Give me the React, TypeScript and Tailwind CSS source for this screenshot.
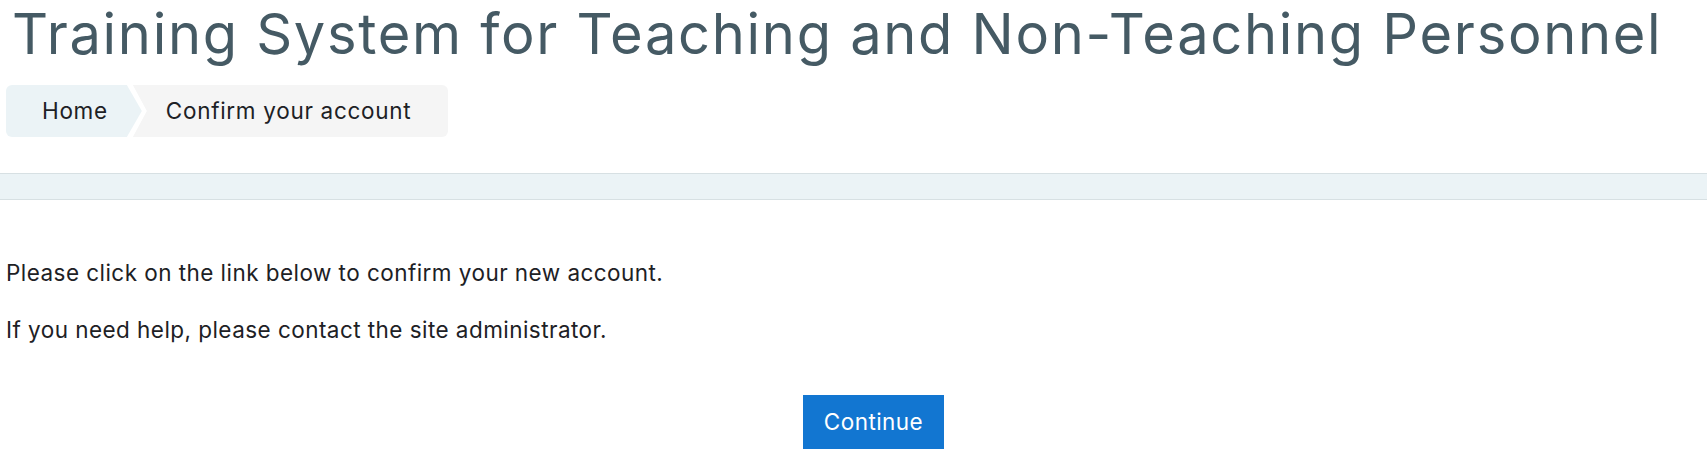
import React from 'react';

const font = { fontFamily: '"Inter", "Noto Sans", sans-serif' };

function Breadcrumb() {
  return (
    <nav className="mt-[17px] ml-[6px] flex">
      <ol className="flex overflow-hidden rounded-[6px] text-[22.5px] leading-[34px] tracking-[0.7px] text-[#1d2125]">
        <li className="bg-[#ebf3f6] py-[9px] pl-[36px] pr-[34px] [clip-path:polygon(0_0,calc(100%-15px)_0,100%_50%,calc(100%-15px)_100%,0_100%)]">
          Home
        </li>
        <li className="-ml-[9px] bg-[#f5f5f5] py-[9px] pl-[33px] pr-[37px] [clip-path:polygon(0_0,100%_0,100%_100%,0_100%,14px_50%)]">
          Confirm your account
        </li>
      </ol>
    </nav>
  );
}

export default function App() {
  return (
    <div className="min-h-[459px] w-full bg-white" style={font}>
      <header className="pl-[12px]">
        <h1 className="text-[56px] font-normal leading-[68px] tracking-[1.7px] text-[#455a64]">
          Training System for Teaching and Non-Teaching Personnel
        </h1>
      </header>
      <Breadcrumb />
      <div className="mt-[36px] h-[26.5px] w-full border-y-[1.5px] border-[#d7e0e3] bg-[#ebf3f6]" />
      <main className="px-[6px] pt-[56px] text-[22.5px] leading-[33.75px] tracking-[0.45px] text-[#1d2125]">
        <p className="mb-[24px]">Please click on the link below to confirm your new account.</p>
        <p className="mb-[24px]">If you need help, please contact the site administrator.</p>
        <div className="flex justify-center pl-[40px] pt-[24px]">
          <button className="flex h-[54px] w-[141px] items-center justify-center bg-[#1276d1] text-[22.5px] text-white">
            Continue
          </button>
        </div>
      </main>
    </div>
  );
}
